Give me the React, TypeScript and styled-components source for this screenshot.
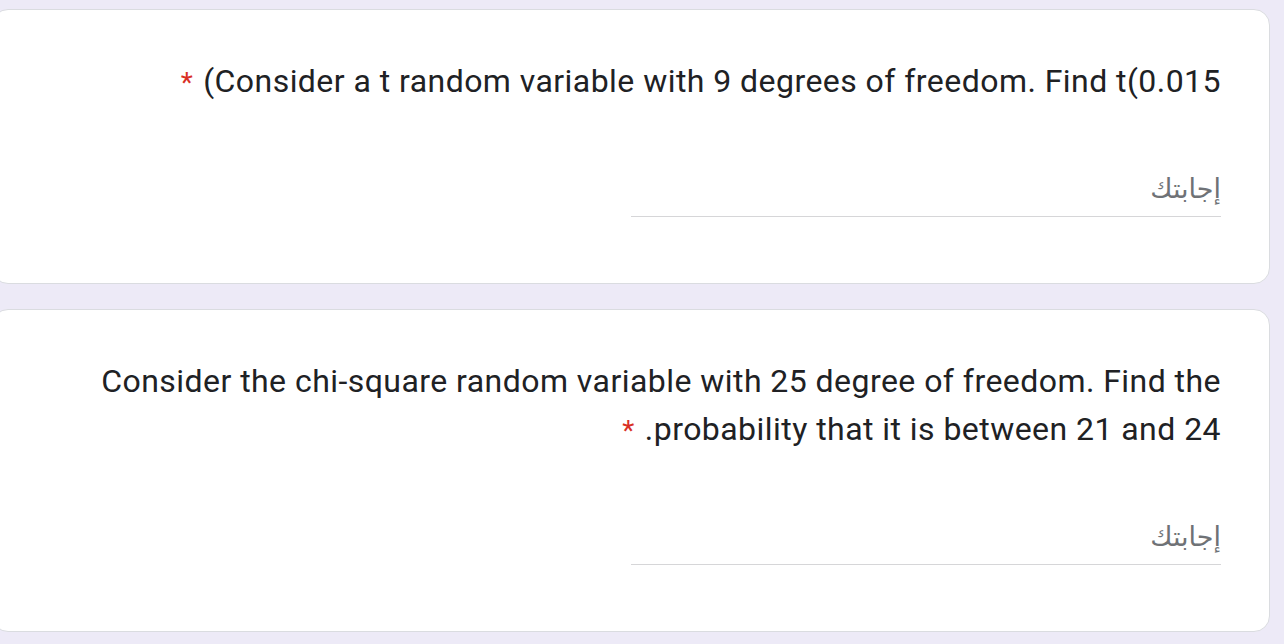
import React from "react";
import styled, { createGlobalStyle } from "styled-components";

const Global = createGlobalStyle`
  html, body {
    margin: 0;
    padding: 0;
    background: #edeaf7;
    overflow: hidden;
  }
  body {
    font-family: Roboto, "Liberation Sans", sans-serif;
  }
`;

const Page = styled.div`
  display: flex;
  flex-direction: column;
  gap: 25px;
  padding-top: 9px;
  width: 1284px;
  height: 644px;
  box-sizing: border-box;
  direction: rtl;
`;

const Card = styled.div`
  box-sizing: border-box;
  margin-right: 14px;
  margin-left: -8px;
  background: #ffffff;
  border: 1px solid #dadce0;
  border-radius: 16px;
  padding: 47px 48px 66px 48px;
  display: flex;
  flex-direction: column;
`;

const Question = styled.div`
  font-family: Roboto, "Liberation Sans", sans-serif;
  font-size: 32px;
  line-height: 48px;
  color: #202124;
  letter-spacing: 0.45px;
`;

const Isolated = styled.span`
  unicode-bidi: isolate;
`;

const Required = styled.span`
  color: #d93025;
  padding-right: 10px;
  font-size: 28px;
  line-height: 1;
`;

const Answer = styled.div`
  margin-top: 64px;
  width: 590px;
  height: 48px;
  box-sizing: border-box;
  border-bottom: 1px solid #d6d6d8;
  padding-bottom: 8px;
  display: flex;
  align-items: center;
  font-family: "DejaVu Sans", "Noto Sans", sans-serif;
  font-size: 27px;
  color: #6f7276;
`;

export default function App() {
  return (
    <>
      <Global />
      <Page>
        <Card>
          <Question>
            Consider a t random variable with 9 degrees of freedom. Find t(0.015
            <Isolated>)</Isolated>
            <Required>*</Required>
          </Question>
          <Answer>إجابتك</Answer>
        </Card>
        <Card>
          <Question>
            Consider the chi-square random variable with 25 degree of freedom. Find the probability that it is between 21 and 24.
            <Required>*</Required>
          </Question>
          <Answer>إجابتك</Answer>
        </Card>
      </Page>
    </>
  );
}
